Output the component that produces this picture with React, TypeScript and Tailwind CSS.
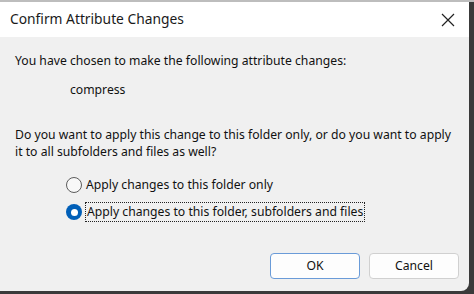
import React from "react";

export default function App() {
  return (
    <div className="w-[474px] h-[294px] bg-[#3a3a3a] relative overflow-hidden" style={{ fontFamily: '"Noto Sans", "Open Sans", sans-serif' }}>
      <div className="h-[2px] bg-[#bdbdbd]" />
      <div className="w-[469px] h-[289px] bg-[#f0f0f0] rounded-br-[8px] flex flex-col overflow-hidden">
        <div className="h-[35px] bg-white flex items-center justify-between pl-[10px] pr-[14px]">
          <span className="text-[13.8px] text-[#1a1a1a]">Confirm Attribute Changes</span>
          <svg width="14" height="14" viewBox="0 0 14 14">
            <path d="M1 1 L13 13 M13 1 L1 13" stroke="#222" strokeWidth="1.2" />
          </svg>
        </div>
        <div className="flex flex-col pl-[15px] pr-[10px] text-[12.2px] text-[#111] whitespace-nowrap">
          <div className="mt-[15px] leading-[18px]">You have chosen to make the following attribute changes:</div>
          <div className="mt-[11px] ml-[55px] leading-[18px]">compress</div>
          <div className="mt-[27px] leading-[17px]">
            <div>Do you want to apply this change to this folder only, or do you want to apply</div>
            <div>it to all subfolders and files as well?</div>
          </div>
          <div className="mt-[15px] ml-[51px] flex items-center gap-[4px] h-[20px]">
            <span className="w-[16px] h-[16px] rounded-full border border-[#5c5c5c] bg-[#f8f8f8]" />
            <span>Apply changes to this folder only</span>
          </div>
          <div className="mt-[7px] ml-[51px] flex items-center gap-[3px] h-[20px]">
            <span className="w-[16px] h-[16px] rounded-full bg-[#005fb8] flex items-center justify-center">
              <span className="w-[7px] h-[7px] rounded-full bg-white" />
            </span>
            <span className="border border-dotted border-[#222] px-[1px] leading-[18px]">Apply changes to this folder, subfolders and files</span>
          </div>
          <div className="mt-[31px] flex justify-end gap-[9px]">
            <button className="w-[90px] h-[26px] rounded-[4px] bg-[#fdfdfd] border border-[#6a9bd8] text-[12.2px] text-[#111]">OK</button>
            <button className="w-[90px] h-[26px] rounded-[4px] bg-[#fdfdfd] border border-[#d0d0d0] text-[12.2px] text-[#111]">Cancel</button>
          </div>
        </div>
      </div>
    </div>
  );
}
